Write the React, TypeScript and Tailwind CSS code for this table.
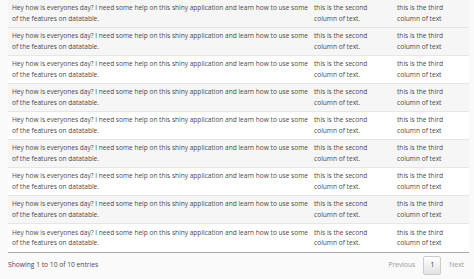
const rows = [
  'bg-[#f6f6f6]',
  'bg-[#f6f6f6]',
  'bg-white',
  'bg-[#f6f6f6]',
  'bg-white',
  'bg-[#f6f6f6]',
  'bg-white',
  'bg-[#f6f6f6]',
  'bg-white',
]

export default function App() {
  return (
    <div className="w-[474px] h-[279px] overflow-hidden bg-[#fafafa] text-[#4a4a4a] font-['Open_Sans',sans-serif]">
      <div className="pl-[8px] pr-[5px]">
        <div className="border-b border-[#aaa]">
          {rows.map((bg, i) => (
            <div
              key={i}
              className={'flex h-[28px] items-center border-b border-[#e6e6e6] last:border-b-0 text-[6.6px] leading-[10.5px] ' + bg}
            >
              <div className="w-[302px] pl-[4px] pr-0 tracking-[-0.02px]">
                Hey how is everyones day? I need some help on this shiny application and learn how to use some of the features on datatable.
              </div>
              <div className="w-[83px] pl-[4px] pr-[12px]">this is the second column of text.</div>
              <div className="flex-1 pl-[4px] pr-[14px]">this is the third column of text</div>
            </div>
          ))}
        </div>
        <div className="flex items-center justify-between h-[25px] text-[6.7px]">
          <span>Showing 1 to 10 of 10 entries</span>
          <div className="flex items-center text-[#999] pr-[5px]">
            <span className="mr-[8px]">Previous</span>
            <span className="w-[18px] h-[19px] mr-[8px] flex items-center justify-center border border-[#ccc] bg-gradient-to-b from-white to-[#e2e2e2] text-[#333] rounded-[2px]">1</span>
            <span>Next</span>
          </div>
        </div>
      </div>
    </div>
  )
}
